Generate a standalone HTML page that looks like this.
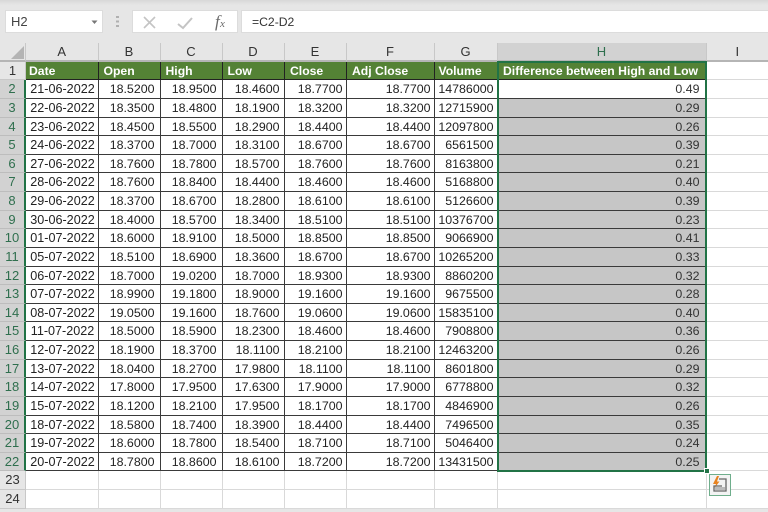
<!DOCTYPE html>
<html><head><meta charset="utf-8"><style>
*{box-sizing:border-box}
html,body{margin:0;padding:0;width:768px;height:512px;overflow:hidden;background:#e6e6e6;font-family:"Liberation Sans",sans-serif;font-size:12.4px;color:#222}
.abs{position:absolute}
.box{position:absolute;background:#fff;border:1px solid #dcdcdc}
#sheet{position:absolute;left:0;top:43px;width:768px}
.r{display:grid;grid-template-columns:26px 72.5px 62px 62px 62px 62px 88px 63px 209px 61.5px;height:18.64px;line-height:18px;background:#fff}
.r>div{border-right:1px solid #d9d9d9;border-bottom:1px solid #d9d9d9;padding:0 3px;text-align:right;white-space:nowrap;overflow:hidden}
.r>div:first-child{background:#e6e6e6;text-align:center;padding:0;font-size:13px;border-right:1px solid #c8c8c8;border-bottom:1px solid #c9c9c9;color:#333}
.r.d>div{border-color:#3a3a3a}
.r.d>div:nth-child(3),.r.d>div:nth-child(4){padding-right:5px}
.r.d>div:nth-child(5){padding-right:4px}
.r.d>div:first-child{background:#d2d2d2;color:#2f6f4e;border-right:2px solid #217346;border-bottom-color:#bdbdbd}
.r.d>div:nth-child(9){background:#c6c6c6;color:#333;padding-right:6px}
.r.d>div:nth-child(10){border-color:#d9d9d9}
.r.d>div:nth-child(2){text-align:center;padding:0 0 0 1.5px;font-size:12.6px}
.r.g>div{background:#548235;color:#fff;font-weight:bold;font-size:12.2px;line-height:19px;text-align:left;border-color:#222;padding-left:3px}
.r.g>div:nth-child(3),.r.g>div:nth-child(4),.r.g>div:nth-child(5){padding-left:5px}
.r.g>div:nth-child(6),.r.g>div:nth-child(7){padding-left:5.5px}
.r.g>div:nth-child(8){padding-left:4px}
.r.g>div:nth-child(9){padding-left:5.5px}
.r.g>div:first-child{background:#e6e6e6;color:#333;font-weight:normal;font-size:13px;line-height:18px;text-align:center;border-color:#c8c8c8;padding-left:0}
.r.g>div:nth-child(10){background:#fff;border-color:#d9d9d9;border-right:none}
.r.h>div{background:#e6e6e6;color:#333;font-size:13px;text-align:center;border-right:1px solid #c8c8c8;border-bottom:2px solid #b5b5b5;padding:0}
.r.h>div:nth-child(9){background:#d2d2d2;color:#2f6f4e}
.r>div:nth-child(10){border-right:none!important}
</style></head><body>
<div class="abs" style="left:0;top:0;width:768px;height:5px;background:linear-gradient(#d8d8d8,#e6e6e6)"></div>
<div class="box" style="left:5px;top:10px;width:98px;height:23px;line-height:22px;padding-left:5px;color:#444;font-size:13px">H2</div>
<svg class="abs" style="left:91px;top:20px" width="8" height="5"><path d="M0.5 0.5H6.5L3.5 4Z" fill="#777"/></svg>
<svg class="abs" style="left:116px;top:16px" width="4" height="13"><rect x="0" y="0" width="3" height="2" fill="#b0b0b0"/><rect x="0" y="4.500" width="3" height="2" fill="#b0b0b0"/><rect x="0" y="9" width="3" height="2" fill="#b0b0b0"/></svg>
<div class="box" style="left:132px;top:10px;width:106px;height:23px"></div>
<svg class="abs" style="left:142px;top:15px" width="90" height="16"><path d="M2 2L13 13M13 2L2 13" stroke="#c4c4c4" stroke-width="1.6" fill="none"/><path d="M36 9L41 13L50 3" stroke="#c4c4c4" stroke-width="2" fill="none"/><text x="73" y="12" font-family="Liberation Serif" font-style="italic" font-size="17" fill="#6a6a6a">f</text><text x="78" y="12" font-family="Liberation Serif" font-style="italic" font-size="11" fill="#6a6a6a">x</text></svg>
<div class="box" style="left:241px;top:10px;width:527px;height:23px;line-height:22px;padding-left:10px;border-right:none;color:#333;font-size:12.2px">=C2-D2</div>

<div id="sheet">
<div class="r h"><div></div><div>A</div><div>B</div><div>C</div><div>D</div><div>E</div><div>F</div><div>G</div><div>H</div><div>I</div></div>
<div class="r g"><div>1</div><div>Date</div><div>Open</div><div>High</div><div>Low</div><div>Close</div><div>Adj Close</div><div>Volume</div><div>Difference between High and Low</div><div></div></div>
<div class="r d"><div>2</div><div>21-06-2022</div><div>18.5200</div><div>18.9500</div><div>18.4600</div><div>18.7700</div><div>18.7700</div><div>14786000</div><div style="background:#fff">0.49</div><div></div></div>
<div class="r d"><div>3</div><div>22-06-2022</div><div>18.3500</div><div>18.4800</div><div>18.1900</div><div>18.3200</div><div>18.3200</div><div>12715900</div><div>0.29</div><div></div></div>
<div class="r d"><div>4</div><div>23-06-2022</div><div>18.4500</div><div>18.5500</div><div>18.2900</div><div>18.4400</div><div>18.4400</div><div>12097800</div><div>0.26</div><div></div></div>
<div class="r d"><div>5</div><div>24-06-2022</div><div>18.3700</div><div>18.7000</div><div>18.3100</div><div>18.6700</div><div>18.6700</div><div>6561500</div><div>0.39</div><div></div></div>
<div class="r d"><div>6</div><div>27-06-2022</div><div>18.7600</div><div>18.7800</div><div>18.5700</div><div>18.7600</div><div>18.7600</div><div>8163800</div><div>0.21</div><div></div></div>
<div class="r d"><div>7</div><div>28-06-2022</div><div>18.7600</div><div>18.8400</div><div>18.4400</div><div>18.4600</div><div>18.4600</div><div>5168800</div><div>0.40</div><div></div></div>
<div class="r d"><div>8</div><div>29-06-2022</div><div>18.3700</div><div>18.6700</div><div>18.2800</div><div>18.6100</div><div>18.6100</div><div>5126600</div><div>0.39</div><div></div></div>
<div class="r d"><div>9</div><div>30-06-2022</div><div>18.4000</div><div>18.5700</div><div>18.3400</div><div>18.5100</div><div>18.5100</div><div>10376700</div><div>0.23</div><div></div></div>
<div class="r d"><div>10</div><div>01-07-2022</div><div>18.6000</div><div>18.9100</div><div>18.5000</div><div>18.8500</div><div>18.8500</div><div>9066900</div><div>0.41</div><div></div></div>
<div class="r d"><div>11</div><div>05-07-2022</div><div>18.5100</div><div>18.6900</div><div>18.3600</div><div>18.6700</div><div>18.6700</div><div>10265200</div><div>0.33</div><div></div></div>
<div class="r d"><div>12</div><div>06-07-2022</div><div>18.7000</div><div>19.0200</div><div>18.7000</div><div>18.9300</div><div>18.9300</div><div>8860200</div><div>0.32</div><div></div></div>
<div class="r d"><div>13</div><div>07-07-2022</div><div>18.9900</div><div>19.1800</div><div>18.9000</div><div>19.1600</div><div>19.1600</div><div>9675500</div><div>0.28</div><div></div></div>
<div class="r d"><div>14</div><div>08-07-2022</div><div>19.0500</div><div>19.1600</div><div>18.7600</div><div>19.0600</div><div>19.0600</div><div>15835100</div><div>0.40</div><div></div></div>
<div class="r d"><div>15</div><div>11-07-2022</div><div>18.5000</div><div>18.5900</div><div>18.2300</div><div>18.4600</div><div>18.4600</div><div>7908800</div><div>0.36</div><div></div></div>
<div class="r d"><div>16</div><div>12-07-2022</div><div>18.1900</div><div>18.3700</div><div>18.1100</div><div>18.2100</div><div>18.2100</div><div>12463200</div><div>0.26</div><div></div></div>
<div class="r d"><div>17</div><div>13-07-2022</div><div>18.0400</div><div>18.2700</div><div>17.9800</div><div>18.1100</div><div>18.1100</div><div>8601800</div><div>0.29</div><div></div></div>
<div class="r d"><div>18</div><div>14-07-2022</div><div>17.8000</div><div>17.9500</div><div>17.6300</div><div>17.9000</div><div>17.9000</div><div>6778800</div><div>0.32</div><div></div></div>
<div class="r d"><div>19</div><div>15-07-2022</div><div>18.1200</div><div>18.2100</div><div>17.9500</div><div>18.1700</div><div>18.1700</div><div>4846900</div><div>0.26</div><div></div></div>
<div class="r d"><div>20</div><div>18-07-2022</div><div>18.5800</div><div>18.7400</div><div>18.3900</div><div>18.4400</div><div>18.4400</div><div>7496500</div><div>0.35</div><div></div></div>
<div class="r d"><div>21</div><div>19-07-2022</div><div>18.6000</div><div>18.7800</div><div>18.5400</div><div>18.7100</div><div>18.7100</div><div>5046400</div><div>0.24</div><div></div></div>
<div class="r d"><div>22</div><div>20-07-2022</div><div>18.7800</div><div>18.8600</div><div>18.6100</div><div>18.7200</div><div>18.7200</div><div>13431500</div><div>0.25</div><div></div></div>
<div class="r"><div>23</div><div></div><div></div><div></div><div></div><div></div><div></div><div></div><div></div><div></div></div>
<div class="r"><div>24</div><div></div><div></div><div></div><div></div><div></div><div></div><div></div><div></div><div></div></div>
</div>

<svg class="abs" style="left:8px;top:45px" width="17" height="15"><path d="M16 1V14H3Z" fill="#b4b4b4"/></svg>
<div class="abs" style="left:497px;top:61px;width:210px;height:411px;border:2px solid #217346"></div>
<div class="abs" style="left:704px;top:468px;width:6px;height:6px;background:#217346;border:1px solid #fff"></div>
<div class="abs" style="left:709px;top:474px;width:22px;height:22px;background:#f3f3f3;border:1px solid #6fae8c"></div>
<svg class="abs" style="left:711px;top:476px" width="18" height="18"><path d="M6 0L2 8H5L3.500 12L8.500 5.500H6L8 0Z" fill="#e8821e"/><path d="M8 3H15V15H3V10H11" stroke="#666" stroke-width="1.300" fill="none"/><rect x="4" y="11" width="10" height="3" fill="#bbb"/></svg>
</body></html>
